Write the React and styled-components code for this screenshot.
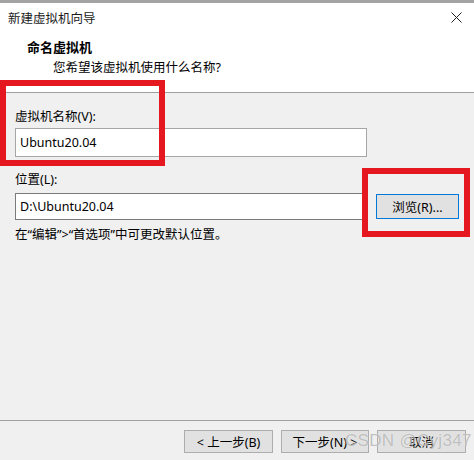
import styled, { createGlobalStyle } from 'styled-components';

const GlobalStyle = createGlobalStyle`
    html, body {
        margin: 0;
        padding: 0;
        background: #f0f0f0;
    }
    * {
        box-sizing: border-box;
    }
`;

const FONT = `"Noto Sans", "Noto Sans CJK SC", sans-serif`;

export default function App() {
    return (
        <Window>
            <GlobalStyle />
            <TopStrip />
            <TitleBar>
                <TitleText>新建虚拟机向导</TitleText>
                <CloseButton>
                    <svg width="11" height="11" viewBox="0 0 11 11">
                        <path d="M0.5 0.5 L10.5 10.5 M10.5 0.5 L0.5 10.5" stroke="#222" strokeWidth="1" />
                    </svg>
                </CloseButton>
            </TitleBar>

            <Header>
                <Heading>命名虚拟机</Heading>
                <SubHeading>您希望该虚拟机使用什么名称?</SubHeading>
            </Header>

            <Body>
                <Label>虚拟机名称(V):</Label>
                <TextBox $width={352} $height={29} $border="#a6a6a6">Ubuntu20.04</TextBox>

                <Label $top={15} $gap={5}>位置(L):</Label>
                <Row>
                    <TextBox $width={348} $height={27} $border="#7a7a7a">D:\Ubuntu20.04</TextBox>
                    <Button $width={83} $height={25} $focused>浏览(R)...</Button>
                </Row>
                <Note>在“编辑”&gt;“首选项”中可更改默认位置。</Note>
            </Body>

            <Footer>
                <Button $width={89} $height={23}>&lt; 上一步(B)</Button>
                <Button $width={88} $height={23}>下一步(N) &gt;</Button>
                <Button $width={89} $height={23}>取消</Button>
            </Footer>

            <Highlight style={{ left: 0, top: 80, width: 165, height: 86 }} />
            <Highlight style={{ left: 362, top: 168, width: 108, height: 69 }} />
            <Watermark>CSDN @Cyj347</Watermark>
        </Window>
    );
}

const Window = styled.div`
    position: relative;
    width: 474px;
    height: 460px;
    display: flex;
    flex-direction: column;
    background: #f0f0f0;
    font-family: ${FONT};
    font-size: 12.5px;
    color: #000;
    overflow: hidden;
`;

const TopStrip = styled.div`
    height: 3px;
    background: #a3a3a3;
`;

const TitleBar = styled.div`
    height: 29px;
    display: flex;
    align-items: center;
    justify-content: space-between;
    padding: 0 12px 0 8px;
    background: #fff;
`;

const TitleText = styled.span`
    font-size: 12.5px;
    color: #1a1a1a;
`;

const CloseButton = styled.div`
    display: flex;
    align-items: center;
    justify-content: center;
    width: 11px;
    height: 11px;
`;

const Header = styled.div`
    height: 61px;
    background: #fff;
    border-bottom: 1px solid #a0a0a0;
    padding-top: 6px;
    display: flex;
    flex-direction: column;
    gap: 3px;
`;

const Heading = styled.div`
    padding-left: 27px;
    line-height: 18px;
    font-weight: bold;
    font-size: 13px;
`;

const SubHeading = styled.div`
    padding-left: 53px;
    line-height: 18px;
`;

const Body = styled.div`
    flex: 1;
    padding: 16px 0 0 15px;
    display: flex;
    flex-direction: column;
`;

const Label = styled.div`
    line-height: 16px;
    margin-top: ${(p) => p.$top || 0}px;
    margin-bottom: ${(p) => p.$gap || 3}px;
`;

const TextBox = styled.div`
    width: ${(p) => p.$width}px;
    height: ${(p) => p.$height}px;
    background: #fff;
    border: 1px solid ${(p) => p.$border};
    display: flex;
    align-items: center;
    padding-left: 4px;
    font-size: 12.5px;
`;

const Row = styled.div`
    display: flex;
    align-items: center;
    gap: 13px;
`;

const Button = styled.div`
    width: ${(p) => p.$width}px;
    height: ${(p) => p.$height}px;
    background: #e1e1e1;
    border: 1px solid ${(p) => (p.$focused ? '#0078d7' : '#adadad')};
    display: flex;
    align-items: center;
    justify-content: center;
    font-size: 12.5px;
    color: #000;
`;

const Note = styled.div`
    margin-top: 7px;
    line-height: 16px;
`;

const Footer = styled.div`
    height: 40px;
    border-top: 1px solid #a0a0a0;
    display: flex;
    justify-content: flex-end;
    align-items: flex-start;
    gap: 8px;
    padding: 9px 8px 0 0;
`;

const Highlight = styled.div`
    position: absolute;
    border: 6px solid #e5171f;
    pointer-events: none;
`;

const Watermark = styled.div`
    position: absolute;
    left: 345px;
    top: 431px;
    font-family: "Liberation Sans", Arial, sans-serif;
    font-size: 17px;
    letter-spacing: 0.3px;
    color: rgba(140, 140, 140, 0.55);
    text-shadow: 0 0 1px rgba(255, 255, 255, 0.9);
    pointer-events: none;
`;
